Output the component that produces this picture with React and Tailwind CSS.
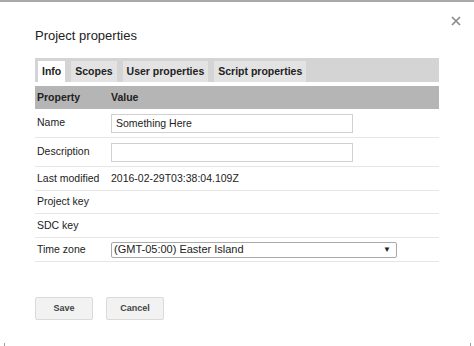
const rows = [
  { label: "Name", kind: "input", value: "Something Here", h: "h-[29px]" },
  { label: "Description", kind: "input", value: "", h: "h-[29px]" },
  { label: "Last modified", kind: "text", value: "2016-02-29T03:38:04.109Z", h: "h-[24px]" },
  { label: "Project key", kind: "text", value: "", h: "h-[23px]" },
  { label: "SDC key", kind: "text", value: "", h: "h-[24px]" },
  { label: "Time zone", kind: "select", value: "(GMT-05:00) Easter Island", h: "h-[24px]" },
];

const tabs = ["Info", "Scopes", "User properties", "Script properties"];

export default function App() {
  return (
    <div
      className="relative w-[474px] h-[346px] bg-white border-t-2 border-[#a9a9a9] text-[#222]"
      style={{ fontFamily: '"Liberation Sans", Arial, sans-serif' }}
    >
      <button className="absolute right-[13px] top-[13px] w-[11px] h-[11px] flex items-center justify-center">
        <svg width="10" height="10" viewBox="0 0 10 10">
          <path d="M1 1 L9 9 M9 1 L1 9" stroke="#8a8a8a" strokeWidth="1.7" />
        </svg>
      </button>

      <div className="px-[35px] pt-[26px]">
        <h1 className="text-[13px] leading-[16px] font-normal">Project properties</h1>

        <div className="mt-[14px] h-[24px] bg-[#d4d4d4] flex items-end pl-[3px] gap-[6px]">
          {tabs.map((t, i) => (
            <div
              key={t}
              className={`h-[21px] px-[4px] flex items-center text-[10.5px] font-bold ${
                i === 0 ? "bg-white" : "bg-[#e3e3e3]"
              }`}
            >
              {t}
            </div>
          ))}
        </div>

        <div className="mt-[4px] h-[23px] bg-[#b5b5b5] flex items-center text-[10.5px] font-bold">
          <div className="w-[76px] pl-[2px]">Property</div>
          <div>Value</div>
        </div>

        {rows.map((r) => (
          <div
            key={r.label}
            className={`${r.h} flex items-center border-b border-[#e6e6e6] text-[10.5px]`}
          >
            <div className="w-[76px] pl-[2px]">{r.label}</div>
            {r.kind === "input" && (
              <input
                readOnly
                value={r.value}
                className="w-[242px] h-[19px] border border-[#d0d0d0] px-[4px] text-[10.5px] text-[#222] outline-none"
              />
            )}
            {r.kind === "text" && <div>{r.value}</div>}
            {r.kind === "select" && (
              <div className="w-[286px] h-[16px] border border-[#a9a9a9] rounded-[2px] flex items-center justify-between pl-[2px] pr-[5px] text-[11px]">
                <span>{r.value}</span>
                <span className="text-[8px]">▼</span>
              </div>
            )}
          </div>
        ))}

        <div className="mt-[35px] flex gap-[13px]">
          <button className="w-[58px] h-[23px] bg-[#f2f2f2] border border-[#dadada] rounded-[2px] text-[9px] font-bold text-[#444]">
            Save
          </button>
          <button className="w-[58px] h-[23px] bg-[#f2f2f2] border border-[#dadada] rounded-[2px] text-[9px] font-bold text-[#444]">
            Cancel
          </button>
        </div>
      </div>

      <span className="absolute left-[4px] bottom-0 w-px h-[3px] bg-[#9a9a9a]" />
      <span className="absolute right-[3px] bottom-0 w-px h-[3px] bg-[#9a9a9a]" />
    </div>
  );
}
